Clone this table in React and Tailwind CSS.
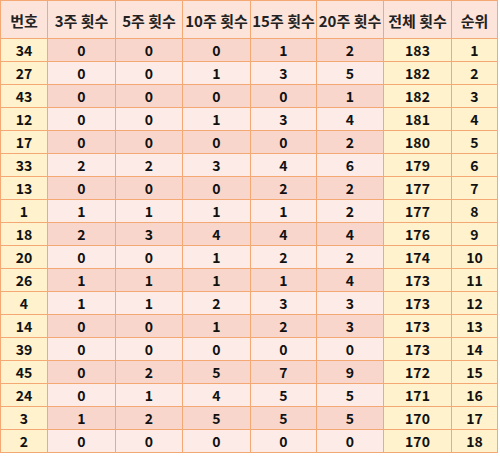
import React from "react";

const rows = [
  [34,0,0,0,1,2,183,1],
  [27,0,0,1,3,5,182,2],
  [43,0,0,0,0,1,182,3],
  [12,0,0,1,3,4,181,4],
  [17,0,0,0,0,2,180,5],
  [33,2,2,3,4,6,179,6],
  [13,0,0,0,2,2,177,7],
  [1,1,1,1,1,2,177,8],
  [18,2,3,4,4,4,176,9],
  [20,0,0,1,2,2,174,10],
  [26,1,1,1,1,4,173,11],
  [4,1,1,2,3,3,173,12],
  [14,0,0,1,2,3,173,13],
  [39,0,0,0,0,0,173,14],
  [45,0,2,5,7,9,172,15],
  [24,0,1,4,5,5,171,16],
  [3,1,2,5,5,5,170,17],
  [2,0,0,0,0,0,170,18],
];

const headers = ["번호","3주 횟수","5주 횟수","10주 횟수","15주 횟수","20주 횟수","전체 횟수","순위"];
const widths = [47,68,67,68,66,67,68,46];

export default function App() {
  return (
    <div className="w-[500px] h-[459px] bg-white">
      <table
        className="table-fixed border-collapse text-[14px] font-bold text-[#111] font-['Noto_Sans_CJK_KR','Noto_Sans',sans-serif]"
        style={{ width: 498 }}
      >
        <colgroup>
          {widths.map((w, i) => (
            <col key={i} style={{ width: w }} />
          ))}
        </colgroup>
        <thead>
          <tr className="h-[38px] bg-[#fce4da]">
            {headers.map((h, i) => (
              <th
                key={i}
                className="border border-[#f4a873] p-0 pt-[3px] text-center align-middle whitespace-nowrap text-[15px] font-bold text-[#222]"
              >
                {h}
              </th>
            ))}
          </tr>
        </thead>
        <tbody>
          {rows.map((r, ri) => {
            const mid = ri % 2 === 0 ? "bg-[#f8d6cb]" : "bg-[#fdebe7]";
            return (
              <tr key={ri} className="h-[23px]">
                {r.map((v, ci) => {
                  const bg = ci === 0 || ci >= 6 ? "bg-[#fff2cc]" : mid;
                  return (
                    <td
                      key={ci}
                      className={`border border-[#f4a873] p-0 text-center align-middle leading-[20px] ${bg}`}
                    >
                      {v}
                    </td>
                  );
                })}
              </tr>
            );
          })}
        </tbody>
      </table>
    </div>
  );
}
